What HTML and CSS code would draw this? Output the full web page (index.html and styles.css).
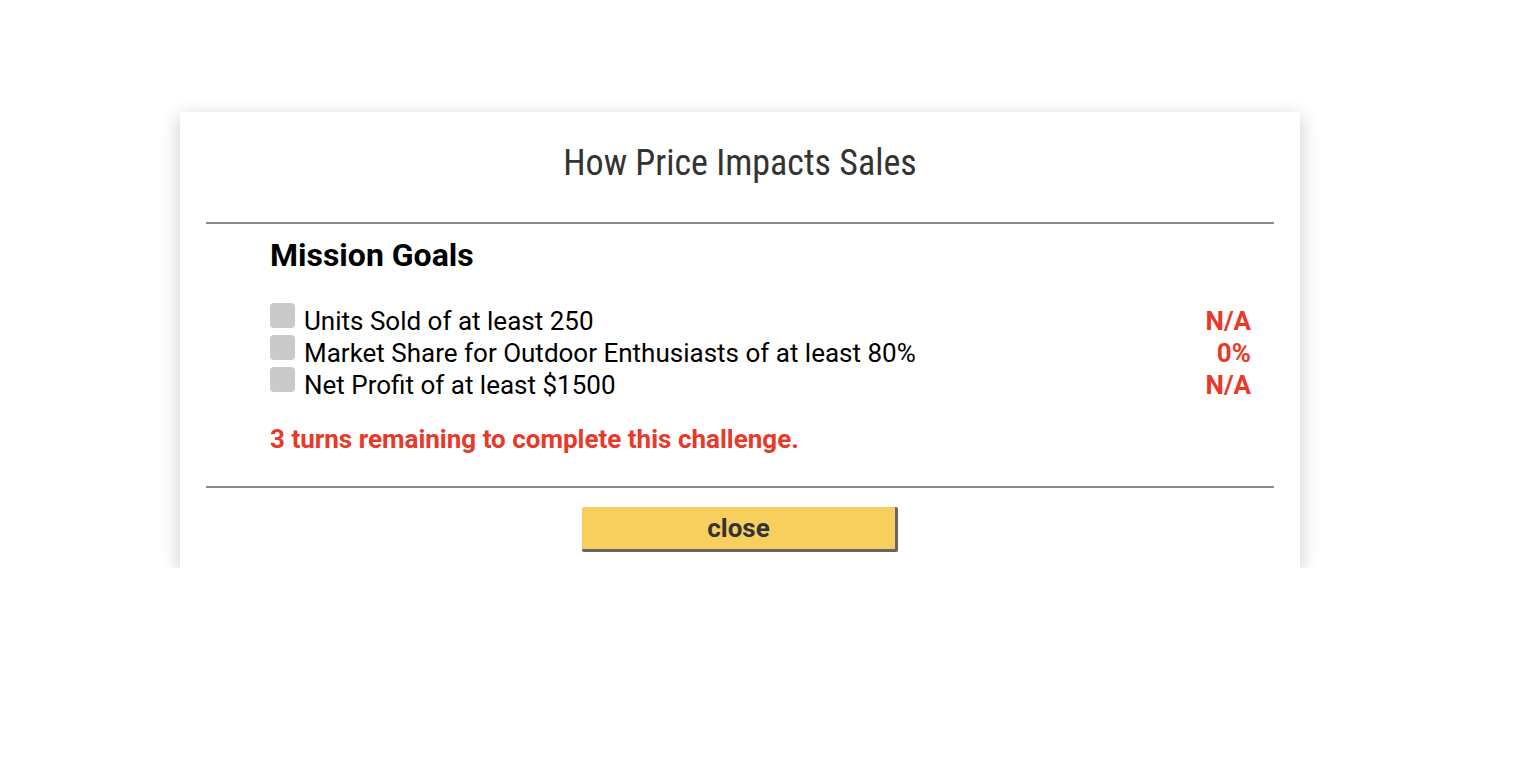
FILE: index.html
```html
<!DOCTYPE html>
<html>
<head>
<meta charset="utf-8">
<link rel="stylesheet" href="styles.css">
</head>
<body>
<div class="dialog">
  <div class="title">How Price Impacts Sales</div>
  <div class="rule"></div>
  <div class="content">
    <div class="heading">Mission Goals</div>
    <div class="goals">
      <div class="goal"><span class="box"></span><span class="label">Units Sold of at least 250</span><span class="value">N/A</span></div>
      <div class="goal"><span class="box"></span><span class="label">Market Share for Outdoor Enthusiasts of at least 80%</span><span class="value">0%</span></div>
      <div class="goal"><span class="box"></span><span class="label">Net Profit of at least $1500</span><span class="value">N/A</span></div>
    </div>
    <div class="turns">3 turns remaining to complete this challenge.</div>
  </div>
  <div class="rule"></div>
  <div class="footer"><button class="close">close</button></div>
</div>
</body>
</html>
```
FILE: styles.css
```css
html, body { margin: 0; padding: 0; background: #fff; }
body { font-family: Roboto, "Liberation Sans", sans-serif; }
.dialog {
  margin: 112px 0 0 180px;
  width: 1120px;
  height: 456px;
  box-sizing: border-box;
  padding: 0 26px;
  background: #fff;
  box-shadow: 0 5px 18px rgba(0,0,0,0.22);
}
.title {
  text-align: center;
  font-size: 36px;
  font-stretch: condensed;
  color: #333;
  line-height: 40px;
  padding: 31px 0 39px;
}
.rule { height: 2px; background: #8a8a8a; }
.content { padding: 13px 23px 0 64px; }
.heading { font-weight: 700; font-size: 32px; line-height: 36px; color: #000; }
.goals { margin-top: 32px; }
.goal { display: flex; align-items: flex-start; height: 32px; font-size: 26px; line-height: 32px; color: #000; }
.box { width: 25px; height: 25px; border-radius: 4px; background: #cacaca; margin: -2px 9px 0 0; flex: none; }
.label { flex: 1; }
.value { color: #e8392a; font-weight: 700; }
.turns { margin-top: 22px; font-size: 26px; font-weight: 700; color: #e8392a; line-height: 32px; padding-bottom: 31px; }
.footer { display: flex; justify-content: center; padding-top: 19px; }
.close {
  width: 316px; height: 45px;
  background: #f8cf5c;
  border: none;
  border-right: 3px solid #666;
  border-bottom: 3px solid #666;
  border-radius: 2px;
  font-family: Roboto, sans-serif;
  font-weight: 700; font-size: 26px; color: #333;
  padding: 0;
}
```
